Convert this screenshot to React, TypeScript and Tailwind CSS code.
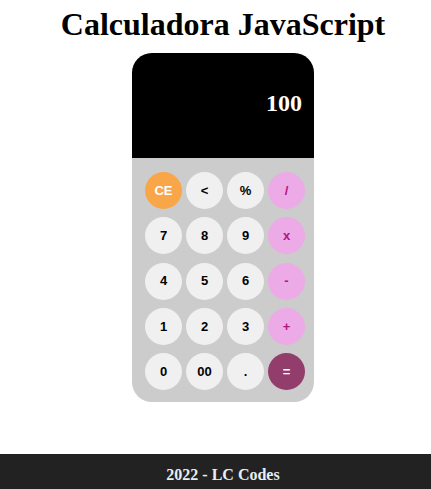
import React from "react";

type Key = {
  label: string;
  kind: "num" | "op" | "clear" | "equal";
};

const rows: Key[][] = [
  [
    { label: "CE", kind: "clear" },
    { label: "<", kind: "num" },
    { label: "%", kind: "num" },
    { label: "/", kind: "op" },
  ],
  [
    { label: "7", kind: "num" },
    { label: "8", kind: "num" },
    { label: "9", kind: "num" },
    { label: "x", kind: "op" },
  ],
  [
    { label: "4", kind: "num" },
    { label: "5", kind: "num" },
    { label: "6", kind: "num" },
    { label: "-", kind: "op" },
  ],
  [
    { label: "1", kind: "num" },
    { label: "2", kind: "num" },
    { label: "3", kind: "num" },
    { label: "+", kind: "op" },
  ],
  [
    { label: "0", kind: "num" },
    { label: "00", kind: "num" },
    { label: ".", kind: "num" },
    { label: "=", kind: "equal" },
  ],
];

const kindClass: Record<Key["kind"], string> = {
  num: "bg-[#f0f0f0] text-black",
  op: "bg-[#ecaae6] text-[#b3167c]",
  clear: "bg-[#f9a648] text-white",
  equal: "bg-[#923d6b] text-white",
};

export default function App() {
  return (
    <div className="flex flex-col min-h-[489px] bg-white font-['Liberation_Serif',serif]">
      <main className="flex-1 flex flex-col items-center pl-[15px]">
        {/* Title */}
        <h1 className="mt-[6px] text-[32px] leading-[36px] font-bold text-black">
          Calculadora JavaScript
        </h1>

        {/* Calculator */}
        <div className="mt-[11px] w-[182px] rounded-[20px] overflow-hidden bg-[#cccccc]">
          <div className="h-[105px] bg-black flex items-center justify-end pr-[12px] pb-[5px]">
            <span className="text-white text-[24px] font-bold leading-none">100</span>
          </div>
          <div className="grid grid-cols-[repeat(4,37px)] auto-rows-[37px] gap-x-[4px] gap-y-[8.25px] pl-[13px] pr-[9px] pt-[14px] pb-[12px]">
            {rows.flat().map((k) => (
              <button
                key={k.label}
                className={`rounded-full flex items-center justify-center font-['Liberation_Sans',Arial,sans-serif] text-[13px] font-bold ${kindClass[k.kind]}`}
              >
                {k.label}
              </button>
            ))}
          </div>
        </div>
      </main>

      {/* Footer */}
      <footer className="h-[35px] bg-[#222222] flex items-center justify-center pl-[15px]">
        <span className="text-[#e8eef2] text-[16px] font-bold pt-[6px]">2022 - LC Codes</span>
      </footer>
    </div>
  );
}
